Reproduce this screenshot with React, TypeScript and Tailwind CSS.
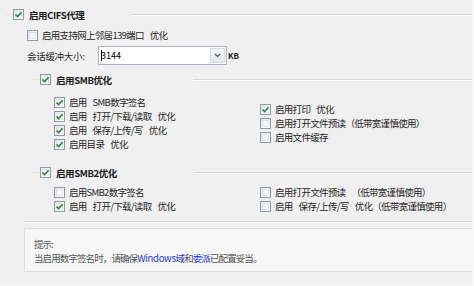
import React from "react";

function Box({ checked }: { checked: boolean }) {
  return (
    <span className="relative inline-flex h-[11px] w-[11px] shrink-0 items-center justify-center border border-[#8e9aa8] bg-gradient-to-br from-[#e4e8ec] to-[#ffffff]">
      <span className="absolute inset-[1px] border border-[#dfe4e9] bg-gradient-to-br from-[#eef1f4] to-[#fbfcfd]" />
      {checked && (
        <svg width="9" height="9" viewBox="0 0 9 9" className="relative">
          <path d="M1.5 4.5 L3.6 6.6 L7.6 2.2" fill="none" stroke="#2f8a2f" strokeWidth="1.7" />
        </svg>
      )}
    </span>
  );
}

function Sp() {
  return <span className="inline-block w-[6px]" />;
}

function Item({ checked, children }: { checked: boolean; children: React.ReactNode }) {
  return (
    <div className="flex h-[14px] items-center gap-[4px] whitespace-nowrap">
      <Box checked={checked} />
      <span className="tracking-[-0.7px]">{children}</span>
    </div>
  );
}

export default function App() {
  return (
    <div
      className="relative h-[286px] w-[474px] overflow-hidden bg-[#f0f0f0] text-[9.5px] leading-[12px] text-[#262626]"
      style={{ fontFamily: '"Noto Sans CJK SC", "Noto Sans", sans-serif' }}
    >
      <div className="pt-[7px] pl-[5px]">
        {/* CIFS header */}
        <div className="flex h-[15px] items-center">
          <div className="w-[8px] border-t border-[#e6e6e6]" />
          <div className="flex w-[117px] items-center gap-[5px] whitespace-nowrap">
            <Box checked={true} />
            <span className="font-bold tracking-[-0.4px] text-[#1a1a1a]">启用CIFS代理</span>
          </div>
          <div className="flex-1 border-t border-[#d4d4d4] shadow-[0_1px_0_#ffffff]" />
        </div>

        <div className="mt-[6px] ml-[22px]">
          <Item checked={false}>启用支持网上邻居139端口<Sp />优化</Item>
        </div>

        <div className="mt-[4px] ml-[22px] flex h-[19px] items-center whitespace-nowrap">
          <span className="w-[71px] tracking-[-0.3px]">会话缓冲大小:</span>
          <div className="flex h-[19px] w-[129px] items-center border border-[#a9b3c0] bg-white">
            <span className="ml-[2px] h-[11px] w-[1px] bg-black" />
            <span className="ml-[-1px] flex-1 text-[9px] text-black">3144</span>
            <div className="mr-[1px] flex h-[15px] w-[15px] items-center justify-center border border-[#d6dce3] bg-gradient-to-b from-[#f6f7f9] to-[#e3e7ec]">
              <svg width="7" height="5" viewBox="0 0 7 5">
                <path d="M1 1 L3.5 3.5 L6 1" fill="none" stroke="#4d5a6a" strokeWidth="1.2" />
              </svg>
            </div>
          </div>
          <span className="ml-[1px] text-[8px] font-bold text-[#222]">KB</span>
        </div>

        {/* SMB group */}
        <div className="mt-[7px] flex h-[15px] items-center">
          <div className="ml-[28px] w-[7px] border-t border-[#e6e6e6]" />
          <div className="flex w-[153px] items-center gap-[5px] whitespace-nowrap">
            <Box checked={true} />
            <span className="font-bold tracking-[-0.4px] text-[#1a1a1a]">启用SMB优化</span>
          </div>
          <div className="flex-1 border-t border-[#d7d7d7] shadow-[0_1px_0_#ffffff]" />
        </div>

        <div className="mt-[8px] ml-[49px] flex">
          <div className="flex w-[206px] flex-col">
            <Item checked={true}>启用<Sp />SMB数字签名</Item>
            <Item checked={true}>启用<Sp />打开/下载/读取<Sp />优化</Item>
            <Item checked={true}>启用<Sp />保存/上传/写<Sp />优化</Item>
            <Item checked={true}>启用目录<Sp />优化</Item>
          </div>
          <div className="flex flex-col justify-center">
            <Item checked={true}>启用打印<Sp />优化</Item>
            <Item checked={false}>启用打开文件预读（低带宽谨慎使用）</Item>
            <Item checked={false}>启用文件缓存</Item>
          </div>
        </div>

        {/* SMB2 group */}
        <div className="mt-[14px] flex h-[15px] items-center">
          <div className="ml-[28px] w-[7px] border-t border-[#e6e6e6]" />
          <div className="flex w-[155px] items-center gap-[5px] whitespace-nowrap">
            <Box checked={true} />
            <span className="font-bold tracking-[-0.4px] text-[#1a1a1a]">启用SMB2优化</span>
          </div>
          <div className="flex-1 border-t border-[#d7d7d7] shadow-[0_1px_0_#ffffff]" />
        </div>

        <div className="mt-[5px] ml-[49px] flex">
          <div className="flex w-[206px] flex-col">
            <Item checked={false}>启用SMB2数字签名</Item>
            <Item checked={true}>启用<Sp />打开/下载/读取<Sp />优化</Item>
          </div>
          <div className="flex flex-col">
            <Item checked={false}>启用打开文件预读<Sp />（低带宽谨慎使用）</Item>
            <Item checked={false}>启用<Sp />保存/上传/写<Sp />优化（低带宽谨慎使用）</Item>
          </div>
        </div>

        <div className="mt-[8px] ml-[19px] border-t border-[#d7d7d7] shadow-[0_1px_0_#ffffff]" />

        <div className="mt-[6px] ml-[19px] h-[44px] whitespace-nowrap border border-[#dedede] bg-[#f7f7f7] pl-[9px] pt-[8px] leading-[14px] tracking-[-0.9px] text-[#555]">
          <div>提示:</div>
          <div>
            当启用数字签名时，请确保<span className="tracking-[-0.3px] text-[#2233dd]">Windows</span><span className="text-[#2233dd]">域</span>和<span className="text-[#2233dd]">委派</span>已配置妥当。
          </div>
        </div>
      </div>
      <div className="absolute right-0 top-0 h-full w-[2px] bg-[#f8f8f8]" />
      <div className="absolute bottom-0 left-0 h-[3px] w-full bg-[#f6f6f6]" />
    </div>
  );
}
